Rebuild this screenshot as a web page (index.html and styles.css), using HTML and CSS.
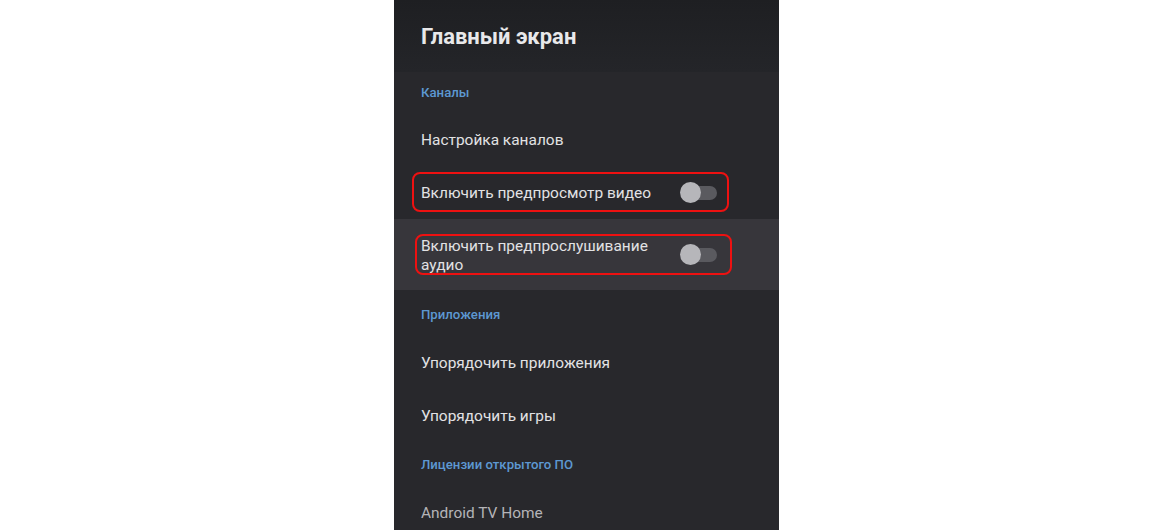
FILE: index.html
```html
<!DOCTYPE html>
<html lang="ru">
<head>
<meta charset="utf-8">
<link rel="stylesheet" href="styles.css">
</head>
<body>
<div class="panel">
  <div class="header"><h1 class="title">Главный экран</h1></div>
  <div class="section first">Каналы</div>
  <div class="item">Настройка каналов</div>
  <div class="item toggle-row">
    <span class="label">Включить предпросмотр видео</span>
    <span class="switch"><span class="track"></span><span class="knob"></span></span>
    <span class="mark mark-a"></span>
  </div>
  <div class="item toggle-row tall focused">
    <span class="label">Включить предпрослушивание<br>аудио</span>
    <span class="switch"><span class="track"></span><span class="knob"></span></span>
    <span class="mark mark-b"></span>
  </div>
  <div class="section">Приложения</div>
  <div class="item">Упорядочить приложения</div>
  <div class="item">Упорядочить игры</div>
  <div class="section last">Лицензии открытого ПО</div>
  <div class="item dim">Android TV Home</div>
</div>
</body>
</html>
```
FILE: styles.css
```css
html, body {
  margin: 0;
  padding: 0;
  background: #ffffff;
  height: 530px;
  overflow: hidden;
}
body {
  font-family: Roboto, "Liberation Sans", sans-serif;
}
.panel {
  margin-left: 394px;
  width: 385px;
  height: 530px;
  background: #28282c;
  display: flex;
  flex-direction: column;
  overflow: hidden;
}
.header {
  height: 72px;
  flex: none;
  background: linear-gradient(#1e1f22, #242529);
  display: flex;
  align-items: center;
  padding-left: 27px;
  box-sizing: border-box;
}
.title {
  margin: 0;
  font-size: 22px;
  font-weight: 700;
  color: #e8e8ea;
}
.section {
  flex: none;
  height: 46px;
  box-sizing: border-box;
  padding: 3px 0 0 27px;
  display: flex;
  align-items: center;
  font-size: 13.2px;
  font-weight: 500;
  color: #5d98d2;
}
.section.first {
  height: 41px;
  padding-top: 0;
}
.section.last {
  height: 44px;
  padding-top: 0;
}
.item {
  flex: none;
  height: 53px;
  box-sizing: border-box;
  padding: 0 62px 0 27px;
  display: flex;
  align-items: center;
  justify-content: space-between;
  font-size: 15.45px;
  color: #e2e2e4;
  position: relative;
}
.item.tall {
  height: 71px;
  line-height: 19px;
  padding-top: 2px;
}
.item.focused {
  background: #37363b;
}
.item.dim {
  color: #b4b4b8;
}
.switch {
  position: relative;
  width: 37px;
  height: 21px;
  flex: none;
}
.tall .switch {
  margin-top: -2px;
}
.track {
  position: absolute;
  left: 4px;
  right: 0;
  top: 4px;
  height: 14px;
  border-radius: 7px;
  background: #5a5a5f;
}
.knob {
  position: absolute;
  left: 0;
  top: 0;
  width: 21px;
  height: 21px;
  border-radius: 50%;
  background: #b6b6ba;
}
.mark {
  position: absolute;
  border: 2px solid #ee1111;
  border-radius: 8px;
  box-sizing: border-box;
  pointer-events: none;
}
.mark-a {
  left: 18px;
  top: 6px;
  width: 317px;
  height: 40px;
}
.mark-b {
  left: 21px;
  top: 15px;
  width: 317px;
  height: 41px;
}
```
